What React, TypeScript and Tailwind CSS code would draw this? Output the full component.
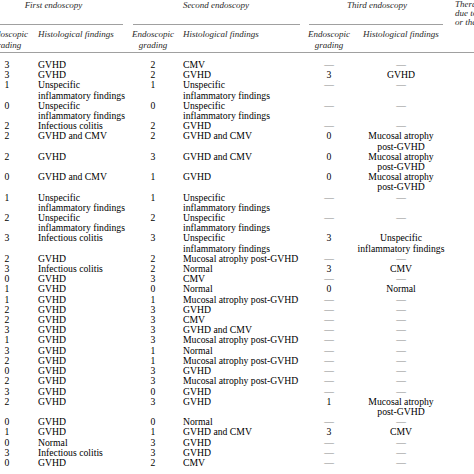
import React from "react";

type Row = [string, string, string, string, string, string];

const U = "Unspecific\ninflammatory findings";
const M = "Mucosal atrophy\npost-GVHD";
const D = "—";

const rows: Row[] = [
  ["3", "GVHD", "2", "CMV", D, D],
  ["3", "GVHD", "2", "GVHD", "3", "GVHD"],
  ["1", U, "1", U, D, D],
  ["0", U, "0", U, D, D],
  ["2", "Infectious colitis", "2", "GVHD", D, D],
  ["2", "GVHD and CMV", "2", "GVHD and CMV", "0", M],
  ["2", "GVHD", "3", "GVHD and CMV", "0", M],
  ["0", "GVHD and CMV", "1", "GVHD", "0", M],
  ["1", U, "1", U, D, D],
  ["2", U, "2", U, D, D],
  ["3", "Infectious colitis", "3", U, "3", U],
  ["2", "GVHD", "2", "Mucosal atrophy post-GVHD", D, D],
  ["3", "Infectious colitis", "2", "Normal", "3", "CMV"],
  ["0", "GVHD", "3", "CMV", D, D],
  ["1", "GVHD", "0", "Normal", "0", "Normal"],
  ["1", "GVHD", "1", "Mucosal atrophy post-GVHD", D, D],
  ["2", "GVHD", "3", "GVHD", D, D],
  ["2", "GVHD", "3", "CMV", D, D],
  ["3", "GVHD", "3", "GVHD and CMV", D, D],
  ["1", "GVHD", "3", "Mucosal atrophy post-GVHD", D, D],
  ["3", "GVHD", "1", "Normal", D, D],
  ["2", "GVHD", "1", "Mucosal atrophy post-GVHD", D, D],
  ["0", "GVHD", "3", "GVHD", D, D],
  ["2", "GVHD", "3", "Mucosal atrophy post-GVHD", D, D],
  ["3", "GVHD", "0", "GVHD", D, D],
  ["2", "GVHD", "3", "GVHD", "1", M],
  ["0", "GVHD", "0", "Normal", D, D],
  ["1", "GVHD", "1", "GVHD and CMV", "3", "CMV"],
  ["0", "Normal", "3", "GVHD", D, D],
  ["3", "Infectious colitis", "3", "GVHD", D, D],
  ["0", "GVHD", "2", "CMV", D, D],
];

const cols = "grid grid-cols-[54px_93px_52px_126px_48px_96px_92px]";

const Lines = ({ text }: { text: string }) => (
  <>
    {text.split("\n").map((l, i) => (
      <div key={i} className={l === D ? "text-[#8a8a8a]" : ""}>
        {l}
      </div>
    ))}
  </>
);

const App = () => {
  return (
    <div className="w-[474px] h-[474px] overflow-hidden bg-white text-black font-['Liberation_Serif',serif]">
      <div className="ml-[-20px] w-[561px]">
        {/* header */}
        <div className={`${cols} grid-rows-[25px_27px] border-b border-[#a0a0a0] italic text-[9px] text-[#2a2a2a]`}>
          <div className="col-span-2 flex flex-col">
            <div className="h-[24px] text-center leading-[10px]">First endoscopy</div>
            <div className="ml-[5px] mr-[4px] h-px bg-[#a0a0a0]" />
          </div>
          <div className="col-span-2 flex flex-col">
            <div className="h-[24px] text-center leading-[10px]">Second endoscopy</div>
            <div className="ml-[6px] mr-[5px] h-px bg-[#a0a0a0]" />
          </div>
          <div className="col-span-2 flex flex-col">
            <div className="h-[24px] text-center leading-[10px]">Third endoscopy</div>
            <div className="ml-[4px] mr-[6px] h-px bg-[#a0a0a0]" />
          </div>
          <div className="row-span-2 pl-[6px] leading-[9px] whitespace-nowrap">
            <div>Therapy changes</div>
            <div>due to findings</div>
            <div>or their absence</div>
          </div>
          <div className="pt-[4px] text-center leading-[10.5px]">Endoscopic<br />grading</div>
          <div className="pt-[4px] pl-[4px] leading-[10.5px] whitespace-nowrap">Histological findings</div>
          <div className="pt-[4px] text-center leading-[10.5px]">Endoscopic<br />grading</div>
          <div className="pt-[4px] pl-[4px] leading-[10.5px] whitespace-nowrap">Histological findings</div>
          <div className="pt-[4px] text-center leading-[10.5px]">Endoscopic<br />grading</div>
          <div className="pt-[4px] text-center leading-[10.5px] whitespace-nowrap">Histological findings</div>
        </div>

        {/* body */}
        <div className="pt-[7px] text-[9.7px] leading-[10.2px]">
          {rows.map((r, i) => (
            <div key={i} className={cols}>
              <div className="text-center"><Lines text={r[0]} /></div>
              <div className="pl-[4px] whitespace-nowrap"><Lines text={r[1]} /></div>
              <div className="text-center"><Lines text={r[2]} /></div>
              <div className="pl-[4px] whitespace-nowrap"><Lines text={r[3]} /></div>
              <div className="text-center"><Lines text={r[4]} /></div>
              <div className="text-center whitespace-nowrap"><Lines text={r[5]} /></div>
              <div />
            </div>
          ))}
        </div>
      </div>
    </div>
  );
};

export default App;
